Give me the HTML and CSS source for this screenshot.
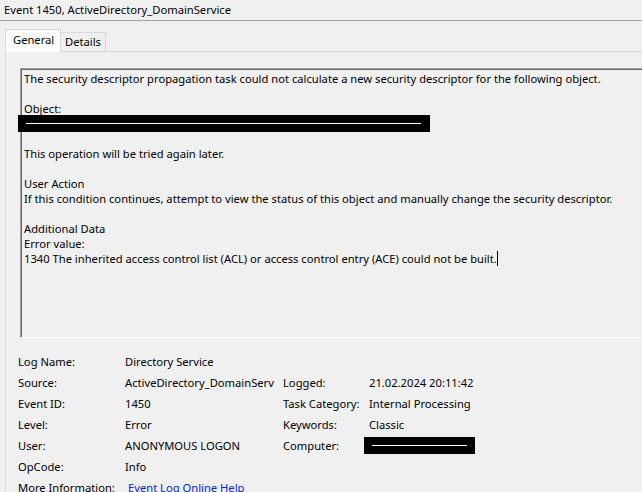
FILE: index.html
```html
<!DOCTYPE html>
<html>
<head>
<meta charset="utf-8">
<link rel="stylesheet" href="styles.css">
</head>
<body>
<div class="title">Event 1450, ActiveDirectory_DomainService</div>
<div class="tabs">
  <div class="tab active">General</div>
  <div class="tab">Details</div>
</div>
<div class="page">
  <div class="desc">
    <div class="line">The security descriptor propagation task could not calculate a new security descriptor for the following object.</div>
    <div class="line">&nbsp;</div>
    <div class="line">Object:</div>
    <div class="redact big"><span></span></div>
    <div class="line">&nbsp;</div>
    <div class="line">This operation will be tried again later.</div>
    <div class="line">&nbsp;</div>
    <div class="line">User Action</div>
    <div class="line">If this condition continues, attempt to view the status of this object and manually change the security descriptor.</div>
    <div class="line">&nbsp;</div>
    <div class="line">Additional Data</div>
    <div class="line">Error value:</div>
    <div class="line">1340 The inherited access control list (ACL) or access control entry (ACE) could not be built.<span class="caret"></span></div>
  </div>
  <div class="props">
    <div class="lbl">Log Name:</div><div class="val">Directory Service</div><div></div><div></div>
    <div class="lbl">Source:</div><div class="val">ActiveDirectory_DomainServ</div><div class="lbl">Logged:</div><div class="val">21.02.2024 20:11:42</div>
    <div class="lbl">Event ID:</div><div class="val">1450</div><div class="lbl">Task Category:</div><div class="val">Internal Processing</div>
    <div class="lbl">Level:</div><div class="val">Error</div><div class="lbl">Keywords:</div><div class="val">Classic</div>
    <div class="lbl">User:</div><div class="val">ANONYMOUS LOGON</div><div class="lbl">Computer:</div><div class="val"><div class="redact small"><span></span></div></div>
    <div class="lbl">OpCode:</div><div class="val">Info</div><div></div><div></div>
    <div class="lbl">More Information:</div><div class="val"><span class="link">Event Log Online Help</span></div><div></div><div></div>
  </div>
</div>
</body>
</html>
```

FILE: styles.css
```css
html, body {
  margin: 0;
  padding: 0;
  background: #f0f0f0;
  width: 642px;
  height: 492px;
  overflow: hidden;
}
body {
  font-family: "Noto Sans", sans-serif;
  font-size: 11.2px;
  color: #000;
}
.title {
  height: 20px;
  line-height: 20px;
  padding-left: 4px;
  border-bottom: 1px solid #a0a0a0;
  white-space: nowrap;
}
.tabs {
  display: flex;
  align-items: flex-end;
  margin-top: 8px;
  padding-left: 5px;
  height: 22px;
}
.tab {
  border: 1px solid #d9d9d9;
  border-bottom: none;
  height: 18px;
  line-height: 18px;
  padding: 0 4px;
  background: #f0f0f0;
}
.tab.active {
  background: #fcfcfc;
  height: 22px;
  line-height: 20px;
  padding: 0 7px;
  width: 40px;
  position: relative;
  z-index: 1;
  margin-bottom: -1px;
}
.tab:not(.active) { border-left: none; }
.page {
  margin-left: 5px;
  width: 637px;
  height: 441px;
  border: 1px solid #d9d9d9;
  border-right: none;
  border-bottom: none;
  padding: 16px 0 0 14px;
  box-sizing: border-box;
  overflow: hidden;
}
.desc {
  height: 270px;
  box-sizing: border-box;
  border-top: 1px solid #a0a0a0;
  border-left: 1px solid #a0a0a0;
  border-bottom: 1px solid #fff;
  box-shadow: inset 1px 1px 0 #696969;
  padding: 2px 0 0 3px;
  line-height: 15px;
  white-space: nowrap;
}
.line { height: 15px; }
.redact {
  background: #000;
  display: flex;
  align-items: center;
}
.redact span {
  display: block;
  height: 1px;
  background: #fff;
}
.redact.big {
  margin: -1px 0 -1px -6px;
  width: 412px;
  height: 17px;
}
.redact.big span { width: 395px; margin-left: 8px; }
.redact.small {
  margin-left: -5px;
  width: 111px;
  height: 17px;
}
.redact.small span { width: 95px; margin-left: 8px; }
.caret {
  display: inline-block;
  width: 1px;
  height: 15px;
  background: #000;
  vertical-align: top;
}
.props {
  display: grid;
  grid-template-columns: 107px 158px 86px 180px;
  grid-auto-rows: 21px;
  margin: 13px 0 0 -2px;
  align-items: center;
  white-space: nowrap;
}
.link { color: #0026e6; margin-left: 3px; }
```
